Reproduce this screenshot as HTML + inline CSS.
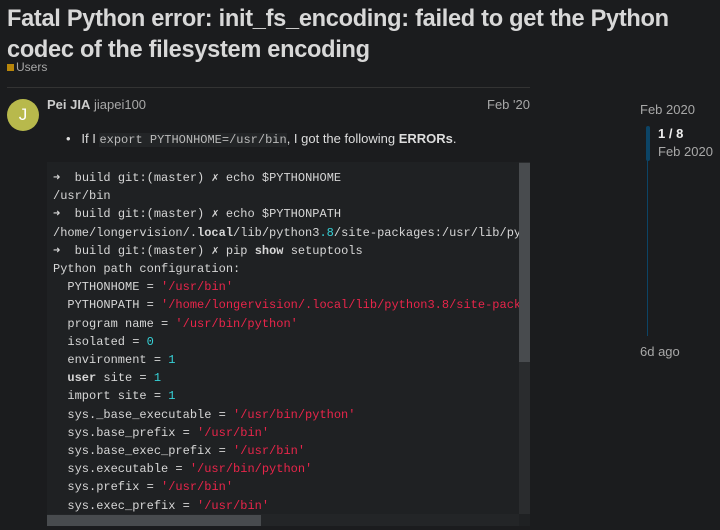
<!DOCTYPE html>
<html><head><style>
*{margin:0;padding:0;box-sizing:border-box}
body{width:720px;height:530px;background:#1b1c1e;color:#ddd;font-family:"Liberation Sans",sans-serif;overflow:hidden;position:relative}
.a{position:absolute;white-space:nowrap}
h1{position:absolute;left:7px;top:4px;font-size:23.6px;line-height:31px;color:#d8d8d8;font-weight:bold;letter-spacing:-0.3px}
.code{position:absolute;left:47px;top:162px;width:483px;height:364px;background:#1f2123;overflow:hidden}
pre{position:absolute;left:6px;top:7px;font-family:"Liberation Mono",monospace;font-size:12px;line-height:18.2px;color:#d6d6d6}
.s{color:#e8254a}.n{color:#36d1d6}.b{font-weight:bold}
</style></head><body>
<h1>Fatal Python error: init_fs_encoding: failed to get the Python<br>codec of the filesystem encoding</h1>
<div class="a" style="left:7px;top:64px;width:7px;height:7px;background:#b8860b"></div>
<div class="a" style="left:16px;top:60px;font-size:12px;color:#a8a8a8">Users</div>
<div class="a" style="left:7px;top:87px;width:523px;height:1px;background:#333"></div>
<div class="a" style="left:7px;top:99px;width:32px;height:32px;border-radius:50%;background:#b8b94c;color:#fff;font-size:17px;text-align:center;line-height:32px">J</div>
<div class="a" style="left:47px;top:97px;font-size:13px;color:#ccc"><b>Pei JIA</b> <span style="color:#a8a8a8">jiapei100</span></div>
<div class="a" style="left:487px;top:97px;font-size:13px;color:#a8a8a8">Feb '20</div>
<div class="a" style="left:66px;top:131px;font-size:13px;color:#ddd">•&nbsp;&nbsp; If I <span style="font-family:'Liberation Mono',monospace;font-size:12px;color:#bbb;background:#232527">export PYTHONHOME=/usr/bin</span>, I got the following <b>ERRORs</b>.</div>
<div class="code"><pre>➜  build git:(master) ✗ echo $PYTHONHOME
/usr/bin
➜  build git:(master) ✗ echo $PYTHONPATH
/home/longervision/.<span class="b">local</span>/lib/python3<span class="n">.8</span>/site-packages:/usr/lib/python3.8
➜  build git:(master) ✗ pip <span class="b">show</span> setuptools
Python path configuration:
  PYTHONHOME = <span class="s">'/usr/bin'</span>
  PYTHONPATH = <span class="s">'/home/longervision/.local/lib/python3.8/site-packages'</span>
  program name = <span class="s">'/usr/bin/python'</span>
  isolated = <span class="n">0</span>
  environment = <span class="n">1</span>
  <span class="b">user</span> site = <span class="n">1</span>
  import site = <span class="n">1</span>
  sys._base_executable = <span class="s">'/usr/bin/python'</span>
  sys.base_prefix = <span class="s">'/usr/bin'</span>
  sys.base_exec_prefix = <span class="s">'/usr/bin'</span>
  sys.executable = <span class="s">'/usr/bin/python'</span>
  sys.prefix = <span class="s">'/usr/bin'</span>
  sys.exec_prefix = <span class="s">'/usr/bin'</span>
</pre>
<div class="a" style="left:472px;top:0;width:11px;height:352px;background:#2a2c2e"></div>
<div class="a" style="left:472px;top:1px;width:11px;height:199px;background:#484b4e"></div>
<div class="a" style="left:0;top:352px;width:472px;height:12px;background:#232527"></div>
<div class="a" style="left:0;top:353px;width:214px;height:11px;background:#484b4e"></div>
</div>
<div class="a" style="left:640px;top:102px;font-size:13px;color:#a8a8a8">Feb 2020</div>
<div class="a" style="left:646px;top:126px;width:4px;height:35px;border-radius:2px;background:#0c4466"></div>
<div class="a" style="left:647px;top:160px;width:1px;height:176px;background:#0c4466"></div>
<div class="a" style="left:658px;top:126px;font-size:13px;color:#eee;font-weight:bold">1 / 8</div>
<div class="a" style="left:658px;top:144px;font-size:13px;color:#a8a8a8">Feb 2020</div>
<div class="a" style="left:640px;top:344px;font-size:13px;color:#a8a8a8">6d ago</div>
</body></html>
